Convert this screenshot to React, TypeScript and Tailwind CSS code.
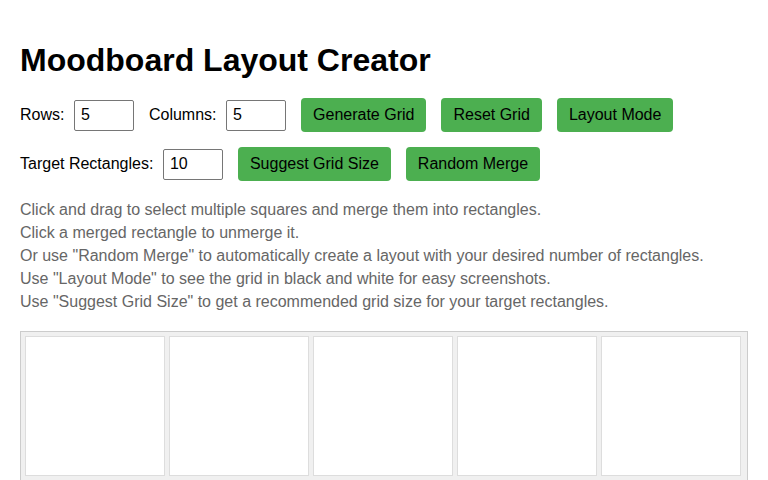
import React from "react";

const btn =
  "h-[34px] px-[12px] bg-[#4CAF50] text-black rounded-[4px] text-[16px] leading-[18px] whitespace-nowrap";
const inp =
  "w-[60px] h-[31px] px-[6px] border border-[#767676] rounded-[2px] text-[16px] leading-[18px] text-black bg-white";

export default function App() {
  const cells = Array.from({ length: 25 });
  return (
    <div
      className="p-5 bg-white text-black"
      style={{ fontFamily: '"Liberation Sans", Arial, sans-serif' }}
    >
      <h1 className="mt-[22px] mb-[19px] text-[32px] font-bold leading-[37px]">
        Moodboard Layout Creator
      </h1>
      <div className="flex items-center h-[34px]">
        <span className="text-[16px]">Rows:</span>
        <input className={`${inp} ml-[9.5px]`} defaultValue="5" />
        <span className="text-[16px] ml-[15px]">Columns:</span>
        <input className={`${inp} ml-[9.5px]`} defaultValue="5" />
        <button className={`${btn} ml-[15px]`}>Generate Grid</button>
        <button className={`${btn} ml-[15px]`}>Reset Grid</button>
        <button className={`${btn} ml-[15px]`}>Layout Mode</button>
      </div>
      <div className="flex items-center h-[34px] mt-[15px]">
        <span className="text-[16px]">Target Rectangles:</span>
        <input className={`${inp} ml-[9.5px]`} defaultValue="10" />
        <button className={`${btn} ml-[15px]`}>Suggest Grid Size</button>
        <button className={`${btn} ml-[15px]`}>Random Merge</button>
      </div>
      <div className="mt-[17px] text-[16px] leading-[23px] text-[#666666]">
        <p>Click and drag to select multiple squares and merge them into rectangles.</p>
        <p>Click a merged rectangle to unmerge it.</p>
        <p>
          Or use "Random Merge" to automatically create a layout with your desired number of
          rectangles.
        </p>
        <p>Use "Layout Mode" to see the grid in black and white for easy screenshots.</p>
        <p>Use "Suggest Grid Size" to get a recommended grid size for your target rectangles.</p>
      </div>
      <div className="mt-[18px] border border-[#cccccc] bg-[#f0f0f0] p-[4px]">
        <div className="grid grid-cols-[repeat(5,140px)] gap-[4px]">
          {cells.map((_, i) => (
            <div key={i} className="h-[140px] bg-white border border-[#dddddd]" />
          ))}
        </div>
      </div>
    </div>
  );
}
